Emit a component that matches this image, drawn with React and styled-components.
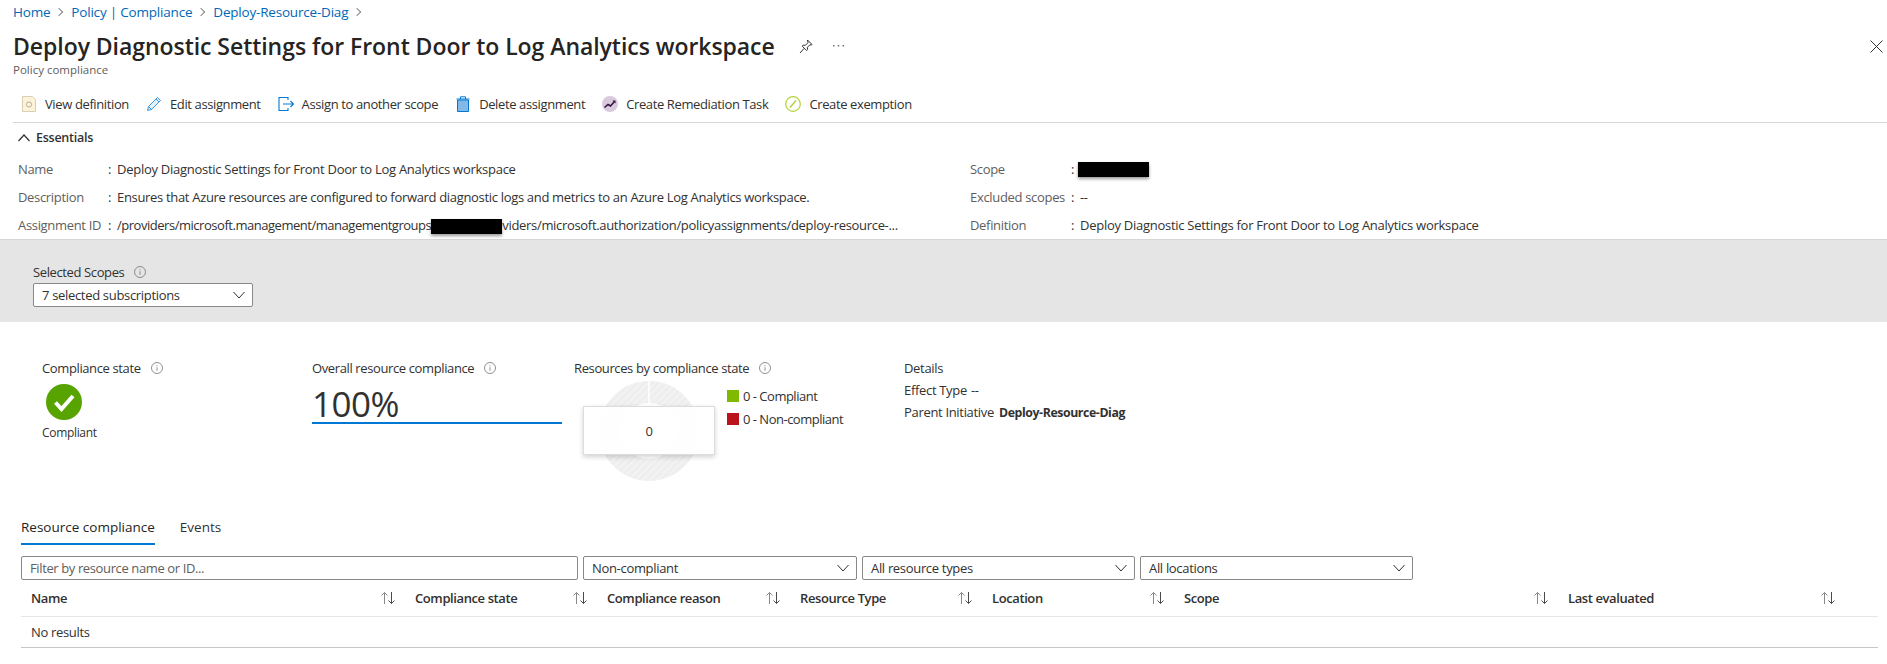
import React from "react";
import styled, { createGlobalStyle } from "styled-components";

const GlobalStyle = createGlobalStyle`
  html, body {
    margin: 0;
    padding: 0;
    background: #fff;
  }
  body {
    font-family: "Open Sans", "Noto Sans", "Liberation Sans", sans-serif;
    font-size: 13px;
    letter-spacing: -0.32px;
    line-height: 20px;
    color: #323130;
  }
  * {
    box-sizing: border-box;
  }
`;

const COLUMNS = [
  "Name",
  "Compliance state",
  "Compliance reason",
  "Resource Type",
  "Location",
  "Scope",
  "Last evaluated",
];

const TOOLS = [
  { label: "View definition", icon: "definition" },
  { label: "Edit assignment", icon: "edit" },
  { label: "Assign to another scope", icon: "assign" },
  { label: "Delete assignment", icon: "delete" },
  { label: "Create Remediation Task", icon: "remediation" },
  { label: "Create exemption", icon: "exemption" },
];

function ToolIcon({ name }) {
  switch (name) {
    case "definition":
      return (
        <svg width="16" height="16" viewBox="0 0 16 16">
          <path d="M1.5 0.5h10l3 3v12h-13z" fill="#fdf3d9" stroke="#d9cfb4" />
          <circle cx="8" cy="8.5" r="2.6" fill="none" stroke="#b4b09f" />
        </svg>
      );
    case "edit":
      return (
        <svg width="16" height="16" viewBox="0 0 16 16" fill="none" stroke="#3a96dd">
          <path d="M1.5 14.5l1-4L11.5 1.5l3 3-9 9z" fill="#e3f1fb" />
          <path d="M2.5 10.5l3 3M10 3l3 3" />
        </svg>
      );
    case "assign":
      return (
        <svg width="16" height="16" viewBox="0 0 16 16" fill="none" stroke="#0078d4" strokeWidth="1.1">
          <path d="M10 4V1.5H1v13h9V12" />
          <path d="M5 8h10.5M12.5 5l3 3-3 3" />
        </svg>
      );
    case "delete":
      return (
        <svg width="16" height="16" viewBox="0 0 16 16">
          <path d="M2.5 4h11v11.5h-11z" fill="#83b9e6" stroke="#0078d4" />
          <path d="M1.5 3h13M5.5 3V0.8h5V3" fill="none" stroke="#0078d4" />
        </svg>
      );
    case "remediation":
      return (
        <svg width="16" height="16" viewBox="0 0 16 16">
          <circle cx="8" cy="8" r="8" fill="#d9c9dd" />
          <path d="M2.5 11.5l3.5-3 2.5 1.5 4-4.5" fill="none" stroke="#32103f" strokeWidth="1.5" />
          <path d="M10.5 4.6h3v3z" fill="#32103f" />
        </svg>
      );
    default:
      return (
        <svg width="16" height="16" viewBox="0 0 16 16" fill="none" stroke="#b5d334" strokeWidth="1.2">
          <circle cx="8" cy="8" r="7.3" />
          <path d="M5 11.5l6-7" strokeWidth="1.5" />
        </svg>
      );
  }
}

const Chevron = () => (
  <svg width="12" height="8" viewBox="0 0 12 8" fill="none" stroke="#323130">
    <path d="M0.5 1l5.5 6 5.5-6" />
  </svg>
);

const Info = () => (
  <InfoWrap width="12" height="12" viewBox="0 0 12 12" fill="none" stroke="#737373" strokeWidth="0.8">
    <circle cx="6" cy="6" r="5.5" />
    <path d="M6 5.2v3.6M6 3.2v1" />
  </InfoWrap>
);

const SortIcon = () => (
  <svg width="16" height="14" viewBox="0 0 16 14" fill="none" strokeWidth="1">
    <path d="M4.5 13V1.5M1.5 4.5l3-3 3 3" stroke="#8a8886" />
    <path d="M11.5 1v11.5M8.5 9.5l3 3 3-3" stroke="#4a4a4a" />
  </svg>
);

function Select({ width, children }) {
  return (
    <SelectBox $width={width}>
      {children}
      <Chevron />
    </SelectBox>
  );
}

export default function App() {
  return (
    <Page>
      <GlobalStyle />
      <Header>
        <Breadcrumb>
          <Crumb>Home</Crumb>
          <CrumbSep />
          <Crumb>Policy | Compliance</Crumb>
          <CrumbSep />
          <Crumb>Deploy-Resource-Diag</Crumb>
          <CrumbSep />
        </Breadcrumb>
        <TitleRow>
          <Title>Deploy Diagnostic Settings for Front Door to Log Analytics workspace</Title>
          <PinButton width="14" height="15" viewBox="0 0 14 15" fill="none" stroke="#323130">
            <path d="M8.5 1l4.5 4.5-1 .6-1-.4-2.6 2.6.2 2.2-1 1L3.2 7.1l1-1 2.2.2L9 3.7l-.4-1.4z" />
            <path d="M5 9.5L1 14" />
          </PinButton>
          <MoreButton width="11" height="2" viewBox="0 0 11 2" fill="#737373">
            <rect x="0" width="1.5" height="1.5" />
            <rect x="4.75" width="1.5" height="1.5" />
            <rect x="9.5" width="1.5" height="1.5" />
          </MoreButton>
          <CloseButton width="13" height="13" viewBox="0 0 13 13" stroke="#323130">
            <path d="M0.5 0.5l12 12M12.5 0.5l-12 12" />
          </CloseButton>
        </TitleRow>
        <Subtitle>Policy compliance</Subtitle>
        <Toolbar>
          {TOOLS.map((tool) => (
            <ToolItem key={tool.label}>
              <ToolIcon name={tool.icon} />
              {tool.label}
            </ToolItem>
          ))}
        </Toolbar>
      </Header>

      <Essentials>
        <EssentialsHead>
          <svg width="12" height="8" viewBox="0 0 12 8" fill="none" stroke="#323130" strokeWidth="1.2">
            <path d="M0.5 7l5.5-6 5.5 6" />
          </svg>
          Essentials
        </EssentialsHead>
        <EssentialsGrid>
          <div>
            <Field $label={90}>
              <FieldLabel>Name</FieldLabel>
              <Colon>:</Colon>
              <WideValue>Deploy Diagnostic Settings for Front Door to Log Analytics workspace</WideValue>
            </Field>
            <Field $label={90}>
              <FieldLabel>Description</FieldLabel>
              <Colon>:</Colon>
              <span>
                Ensures that Azure resources are configured to forward diagnostic logs and metrics to an Azure
                Log Analytics workspace.
              </span>
            </Field>
            <Field $label={90}>
              <FieldLabel>Assignment ID</FieldLabel>
              <Colon>:</Colon>
              <span>
                <IdPrefix>/providers/microsoft.management/managementgroups</IdPrefix>
                <Redacted />
                viders/microsoft.authorization/policyassignments/deploy-resource-...
              </span>
            </Field>
          </div>
          <div>
            <Field $label={101}>
              <FieldLabel>Scope</FieldLabel>
              <Colon>:</Colon>
              <Redacted $flush />
            </Field>
            <Field $label={101}>
              <FieldLabel>Excluded scopes</FieldLabel>
              <Colon>:</Colon>
              <span>--</span>
            </Field>
            <Field $label={101}>
              <FieldLabel>Definition</FieldLabel>
              <Colon>:</Colon>
              <WideValue>Deploy Diagnostic Settings for Front Door to Log Analytics workspace</WideValue>
            </Field>
          </div>
        </EssentialsGrid>
      </Essentials>

      <ScopeBand>
        <ScopeLabel>
          Selected Scopes
          <Info />
        </ScopeLabel>
        <Select width={220}>7 selected subscriptions</Select>
      </ScopeBand>

      <Summary>
        <div>
          <LabelRow>
            Compliance state
            <Info />
          </LabelRow>
          <StateIcon width="36" height="36" viewBox="0 0 36 36">
            <circle cx="18" cy="18" r="18" fill="#57a300" />
            <path d="M9.5 18.5l6 6.5 11.5-13" fill="none" stroke="#fff" strokeWidth="4" />
          </StateIcon>
          <StateText>Compliant</StateText>
        </div>
        <div>
          <LabelRow>
            Overall resource compliance
            <Info />
          </LabelRow>
          <BigNumber>100%</BigNumber>
        </div>
        <div>
          <LabelRow>
            Resources by compliance state
            <Info />
          </LabelRow>
          <ChartRow>
            <Donut>
              <svg width="100" height="100" viewBox="0 0 100 100">
                <defs>
                  <pattern id="emptyHatch" width="5" height="5" patternUnits="userSpaceOnUse" patternTransform="rotate(45)">
                    <rect width="5" height="5" fill="#eeeeee" />
                    <rect width="2" height="5" fill="#f3f3f3" />
                  </pattern>
                </defs>
                <circle cx="50" cy="50" r="39" fill="none" stroke="url(#emptyHatch)" strokeWidth="22" />
                <path d="M50 0v22" stroke="#fff" strokeWidth="1.5" />
              </svg>
              <ChartTip>0</ChartTip>
            </Donut>
            <Legend>
              <LegendRow $color="#7fba00">0 - Compliant</LegendRow>
              <LegendRow $color="#ba141a">0 - Non-compliant</LegendRow>
            </Legend>
          </ChartRow>
        </div>
        <div>
          <div>Details</div>
          <DetailRow>
            Effect Type <DetailValue>--</DetailValue>
          </DetailRow>
          <DetailRow>
            Parent Initiative <DetailStrong>Deploy-Resource-Diag</DetailStrong>
          </DetailRow>
        </div>
      </Summary>

      <Results>
        <Tabs>
          <Tab $active>Resource compliance</Tab>
          <Tab>Events</Tab>
        </Tabs>
        <Filters>
          <FilterInput placeholder="Filter by resource name or ID..." />
          <Select width={274}>Non-compliant</Select>
          <Select width={273}>All resource types</Select>
          <Select width={273}>All locations</Select>
        </Filters>
        <HeadRow>
          {COLUMNS.map((col) => (
            <HeadCell key={col}>
              {col}
              <SortIcon />
            </HeadCell>
          ))}
        </HeadRow>
        <EmptyRow>No results</EmptyRow>
      </Results>
    </Page>
  );
}

const Page = styled.div`
  width: 100%;
  height: 664px;
  overflow: hidden;
`;

const Header = styled.header`
  padding-left: 13px;
  height: 122px;
`;

const Breadcrumb = styled.nav`
  display: flex;
  align-items: center;
  height: 24px;
  font-size: 13.5px;
  letter-spacing: -0.2px;
`;

const Crumb = styled.a`
  color: #0067b8;
`;

const CrumbSep = styled.span`
  width: 6px;
  height: 6px;
  margin: 0 9px 0 6px;
  border-top: 1px solid #8a8886;
  border-right: 1px solid #8a8886;
  transform: rotate(45deg);
`;

const TitleRow = styled.div`
  display: flex;
  align-items: center;
  height: 44px;
  padding-right: 4px;
`;

const Title = styled.h1`
  margin: 0;
  font-size: 23px;
  font-weight: 600;
  letter-spacing: -0.05px;
  line-height: 30px;
  color: #252423;
  white-space: nowrap;
`;

const PinButton = styled.svg`
  margin-left: 24px;
`;

const MoreButton = styled.svg`
  margin-left: 20px;
  margin-bottom: 1px;
`;

const CloseButton = styled.svg`
  margin-left: auto;
`;

const Subtitle = styled.div`
  font-size: 11.5px;
  letter-spacing: 0;
  line-height: 16px;
  color: #605e5c;
  margin-top: -6px;
`;

const Toolbar = styled.div`
  display: flex;
  align-items: center;
  gap: 17px;
  height: 30px;
  margin-top: 11px;
  padding-left: 8px;
  letter-spacing: -0.38px;
`;

const ToolItem = styled.div`
  display: flex;
  align-items: center;
  gap: 8px;
  white-space: nowrap;
`;

const Essentials = styled.section`
  height: 117px;
  margin-left: 13px;
  border-top: 1px solid #d6d6d6;
`;

const EssentialsHead = styled.div`
  display: flex;
  align-items: center;
  gap: 6px;
  height: 29px;
  padding-left: 5px;
  font-weight: 600;
  font-size: 12.5px;
  letter-spacing: -0.25px;
`;

const EssentialsGrid = styled.div`
  display: grid;
  grid-template-columns: 952px 1fr;
  margin-top: 3px;
  padding-left: 5px;
`;

const Field = styled.div`
  display: grid;
  grid-template-columns: ${(p) => p.$label}px 9px 1fr;
  align-items: center;
  height: 28px;
  white-space: nowrap;
`;

const FieldLabel = styled.span`
  color: #605e5c;
`;

const Colon = styled.span`
  color: #323130;
`;

const WideValue = styled.span`
  letter-spacing: -0.27px;
`;

const IdPrefix = styled.span`
  letter-spacing: -0.47px;
`;

const Redacted = styled.span`
  display: inline-block;
  vertical-align: middle;
  width: 71px;
  height: 15px;
  margin-left: ${(p) => (p.$flush ? "-2px" : "0")};
  background: #000;
  box-shadow: 0 2px 3px rgba(0, 0, 0, 0.4);
`;

const ScopeBand = styled.section`
  height: 83px;
  padding: 22px 0 0 33px;
  background: #e5e5e5;
  border-top: 1px solid #d6d6d6;
`;

const LabelRow = styled.div`
  display: flex;
  align-items: center;
  height: 20px;
  letter-spacing: -0.38px;
  white-space: nowrap;
`;

const ScopeLabel = styled(LabelRow)`
  margin-bottom: 1px;
`;

const InfoWrap = styled.svg`
  margin-left: 10px;
`;

const SelectBox = styled.div`
  display: flex;
  align-items: center;
  justify-content: space-between;
  width: ${(p) => p.$width}px;
  height: 24px;
  padding: 0 7px 0 8px;
  background: #fff;
  border: 1px solid #8a8886;
  border-radius: 2px;
`;

const Summary = styled.section`
  display: grid;
  grid-template-columns: 270px 262px 330px 1fr;
  height: 186px;
  padding: 36px 0 0 42px;
`;

const StateIcon = styled.svg`
  display: block;
  margin: 6px 0 0 4px;
`;

const StateText = styled.div`
  margin-top: 3px;
  font-size: 12px;
`;

const BigNumber = styled.div`
  width: 250px;
  height: 46px;
  padding-top: 8px;
  font-size: 35px;
  line-height: 36px;
  letter-spacing: -0.5px;
  border-bottom: 2px solid #0078d4;
`;

const ChartRow = styled.div`
  display: flex;
  margin: 3px 0 0 25px;
`;

const Donut = styled.div`
  position: relative;
  width: 100px;
  height: 100px;
`;

const ChartTip = styled.div`
  position: absolute;
  left: -16px;
  top: 25px;
  display: flex;
  align-items: center;
  justify-content: center;
  width: 132px;
  height: 49px;
  background: rgba(255, 255, 255, 0.93);
  border: 1px solid #dcdcdc;
  box-shadow: 0 2px 5px rgba(0, 0, 0, 0.18);
`;

const Legend = styled.div`
  margin: 3px 0 0 28px;
  letter-spacing: -0.5px;
`;

const LegendRow = styled.div`
  display: flex;
  align-items: center;
  gap: 4px;
  height: 23px;
  white-space: nowrap;

  &::before {
    content: "";
    width: 12px;
    height: 12px;
    background: ${(p) => p.$color};
  }
`;

const DetailRow = styled.div`
  margin-top: 2px;
  white-space: nowrap;
`;

const DetailValue = styled.span`
  margin-left: 1px;
`;

const DetailStrong = styled.strong`
  margin-left: 2px;
  font-size: 12.3px;
  font-weight: 700;
  letter-spacing: -0.4px;
`;

const Results = styled.section`
  margin-left: 21px;
  margin-right: 9px;
`;

const Tabs = styled.div`
  display: flex;
  gap: 25px;
  height: 37px;
`;

const Tab = styled.div`
  padding-top: 9px;
  height: 37px;
  font-size: 13.5px;
  letter-spacing: 0;
  white-space: nowrap;
  color: ${(p) => (p.$active ? "#252423" : "#323130")};
  border-bottom: 2px solid ${(p) => (p.$active ? "#0078d4" : "transparent")};
`;

const Filters = styled.div`
  display: flex;
  gap: 5px;
  margin-top: 11px;
`;

const FilterInput = styled.input`
  width: 557px;
  height: 24px;
  padding: 0 8px;
  font: inherit;
  letter-spacing: -0.38px;
  color: #323130;
  background: #fff;
  border: 1px solid #8a8886;
  border-radius: 2px;

  &::placeholder {
    color: #605e5c;
    opacity: 1;
  }
`;

const HeadRow = styled.div`
  display: grid;
  grid-template-columns: 384px 192px 193px 192px 192px 384px 1fr;
  align-items: center;
  height: 37px;
  padding-left: 10px;
  border-bottom: 1px solid #e6e6e6;
`;

const HeadCell = styled.div`
  display: flex;
  align-items: center;
  justify-content: space-between;
  padding-right: 19px;
  font-weight: 600;
  letter-spacing: -0.4px;
  white-space: nowrap;
  &:last-child {
    padding-right: 42px;
  }
`;

const EmptyRow = styled.div`
  display: flex;
  align-items: center;
  height: 31px;
  padding-left: 10px;
  border-bottom: 1px solid #c8c6c4;
`;
